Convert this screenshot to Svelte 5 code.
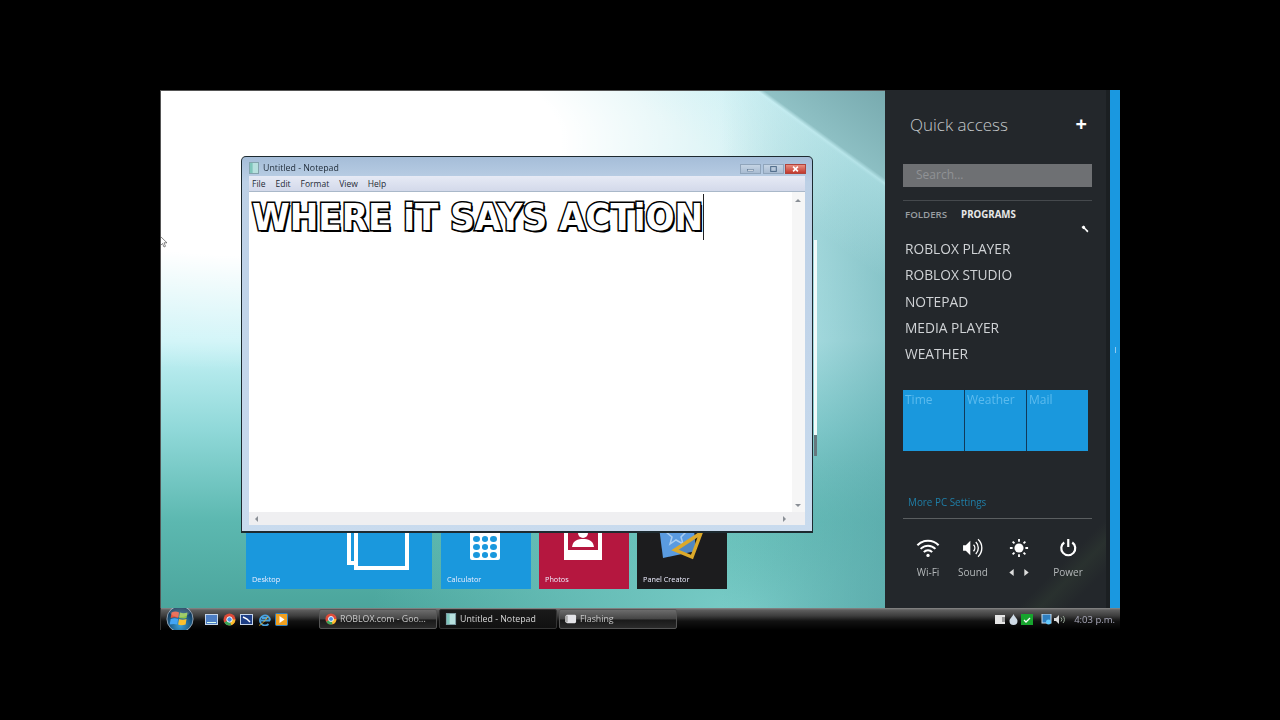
<script>
  const programs = ['ROBLOX PLAYER', 'ROBLOX STUDIO', 'NOTEPAD', 'MEDIA PLAYER', 'WEATHER'];
  const menu = ['File', 'Edit', 'Format', 'View', 'Help'];
  const dots = Array.from({ length: 9 });
</script>

<div class="screen">
  <div class="top">
    <main class="wall">
      <div class="tile blue wide">
        <svg class="glyph desk" viewBox="0 0 62 70"><path d="M2 2v60h7M9 2v65h51V2" fill="none" stroke="#fff" stroke-width="4"/></svg>
        <span>Desktop</span>
      </div>
      <div class="tile blue">
        <div class="calc">{#each dots as _}<i></i>{/each}</div>
        <span>Calculator</span>
      </div>
      <div class="tile red">
        <svg class="glyph photo" viewBox="0 0 38 40"><rect width="38" height="40" fill="#fff"/><rect x="4" y="0" width="30" height="30" fill="#b5173f"/><circle cx="19" cy="13" r="5" fill="#fff"/><path d="M8 27c1-7 6-8 11-8s10 1 11 8z" fill="#fff"/></svg>
        <span>Photos</span>
      </div>
      <div class="tile dark">
        <svg class="glyph panel" viewBox="0 0 48 44"><path d="M3 0h35l3 32-33 7z" fill="#5a9be0"/><path d="M21 6l3 7 7 0-5 5 2 7-7-4-6 4 2-7-6-5 8 0z" fill="none" stroke="#a9cdf0" stroke-width="1.500"/><path d="M46 14L37 38 20 31z" fill="#1c1c1e" fill-opacity=".15" stroke="#dca92a" stroke-width="3.500"/></svg>
        <span>Panel Creator</span>
      </div>

      <svg class="cursor" viewBox="0 0 8 12"><path d="M0.500 0.500v9l2-2 1.500 3.500 1.500-.7L4 6.800l3 0z" fill="#fff" stroke="#555" stroke-width=".7"/></svg>
      <div class="ghost"></div>

      <section class="notepad">
        <header class="title">
          <svg class="np-icon" viewBox="0 0 11 13"><rect x=".5" y=".5" width="10" height="12" fill="#b7e0de" stroke="#7f9fa8"/><path d="M1 1h3v11H1z" fill="#7fc6bb"/></svg>
          <span class="title-text">Untitled - Notepad</span>
          <div class="controls">
            <div class="ctl"><svg viewBox="0 0 20 10"><rect x="6" y="5.500" width="8" height="2" fill="#fff" stroke="#4d6a88" stroke-width=".7"/></svg></div>
            <div class="ctl"><svg viewBox="0 0 20 10"><rect x="6.500" y="2" width="7" height="6" fill="none" stroke="#4d6a88" stroke-width="1.300"/></svg></div>
            <div class="ctl close"><svg viewBox="0 0 20 10"><path d="M7 2l6 6M13 2L7 8" stroke="#fff" stroke-width="2"/></svg></div>
          </div>
        </header>
        <nav class="menu">{#each menu as item}<span>{item}</span>{/each}</nav>
        <div class="edit">
          <div class="doc">
            <div class="typed"><span>WHERE iT SAYS ACTiON</span><b class="caret"></b></div>
          </div>
          <div class="vscroll"><i class="up"></i><i class="down"></i></div>
        </div>
        <div class="hscroll"><i class="left"></i><i class="right"></i></div>
      </section>
    </main>

    <aside class="charm">
      <div class="charm-head"><h1>Quick access</h1><span class="plus">+</span></div>
      <div class="search">Search...</div>
      <div class="tabs"><span>FOLDERS</span><span class="on">PROGRAMS</span></div>
      <div class="wrench-row">
        <svg viewBox="0 0 8 8"><path d="M0.500 2l2-1.500 1.500 1 .3 1.500L7.500 6 6.300 7.500 3.500 4.200 2 4z" fill="#fff"/></svg>
      </div>
      <ul class="programs">{#each programs as p}<li>{p}</li>{/each}</ul>
      <div class="mini-tiles"><div>Time</div><div>Weather</div><div>Mail</div></div>
      <div class="more">More PC Settings</div>
      <div class="sys">
        <div class="sys-item wifi">
          <svg viewBox="0 0 26 20"><path d="M1.500 7a16 16 0 0 1 23 0M5 11a11 11 0 0 1 16 0M8.500 14.500a6 6 0 0 1 9 0" fill="none" stroke="#fff" stroke-width="2.200"/><circle cx="13" cy="18" r="1.800" fill="#fff"/></svg>
          <span>Wi-Fi</span>
        </div>
        <div class="sys-item sound">
          <svg viewBox="0 0 24 22"><path d="M1 8h3l5-5v16l-5-5H1z" fill="#fff"/><path d="M12.500 7.500a5 5 0 0 1 0 7M15 4.500a9 9 0 0 1 0 13M17.500 1.500a13 13 0 0 1 0 19" fill="none" stroke="#fff" stroke-width="1.500"/></svg>
          <span>Sound</span>
        </div>
        <div class="sys-item bright">
          <svg viewBox="0 0 22 22"><circle cx="11" cy="11" r="5" fill="#fff"/><path d="M11 1v3M11 18v3M1 11h3M18 11h3M4 4l2 2M16 16l2 2M18 4l-2 2M6 16l-2 2" stroke="#fff" stroke-width="2"/></svg>
          <span class="arrows"><svg viewBox="0 0 5 8"><path d="M5 0v8L0 4z" fill="#ddd"/></svg><svg viewBox="0 0 5 8"><path d="M0 0v8l5-4z" fill="#ddd"/></svg></span>
        </div>
        <div class="sys-item power">
          <svg viewBox="0 0 20 20"><path d="M6 4.500a7 7 0 1 0 8 0" fill="none" stroke="#fff" stroke-width="2.200"/><path d="M10 1v8" stroke="#fff" stroke-width="2.200"/></svg>
          <span>Power</span>
        </div>
      </div>
    </aside>

    <div class="strip"><i></i></div>
  </div>

  <footer class="taskbar">
    <div class="orb">
      <svg viewBox="0 0 30 30">
        <defs><radialGradient id="orbg" cx=".5" cy=".75" r=".7"><stop offset="0" stop-color="#3aa0d8"/><stop offset="1" stop-color="#0a2a4a"/></radialGradient></defs>
        <circle cx="15" cy="15" r="14" fill="url(#orbg)" stroke="#9ab" stroke-width="1"/>
        <path d="M6 8c3.500-1.500 5.500-1 8 0l-1 6c-2.500-1-5-1-8 0z" fill="#e8553a"/>
        <path d="M15 8c2.500 1 5 1 8 0l-1 6c-3 1-6 .5-8 0z" fill="#8bc34a"/>
        <path d="M5 15c3-1 5-1 8 0l-1 6c-2.500-1-5-1-8 0z" fill="#42a5f5"/>
        <path d="M14 15c2.500 1 5 1 8 0l-1 6c-3 1-6 1-8 0z" fill="#fbc02d"/>
        <ellipse cx="15" cy="7" rx="11" ry="6" fill="#fff" fill-opacity=".18"/>
      </svg>
    </div>
    <div class="quick">
      <svg viewBox="0 0 13 13"><rect x=".5" y="1.500" width="12" height="10" fill="#4d7ec4" stroke="#c5d5ea"/><rect x="2" y="9" width="9" height="1" fill="#dfe"/></svg>
      <svg viewBox="0 0 13 13"><circle cx="6.500" cy="6.500" r="6" fill="#dd4b39"/><path d="M6.500 6.500L1.300 9.500a6 6 0 0 0 7 2.700z" fill="#3aa757"/><path d="M6.500 6.500l1.800 5.700a6 6 0 0 0 4-5.700z" fill="#fbc02d"/><circle cx="6.500" cy="6.500" r="2.700" fill="#4a90e2" stroke="#fff"/></svg>
      <svg viewBox="0 0 13 13"><rect x=".5" y="1.500" width="12" height="10" fill="#1f3f86" stroke="#c5d5ea"/><path d="M3 4l4 2 3 3" stroke="#fff" stroke-width="1.500" fill="none"/></svg>
      <svg viewBox="0 0 13 13"><path d="M12 7.500A5 5 0 1 0 10.500 11M3 7.500h9M4 5h5" fill="none" stroke="#4aa3df" stroke-width="1.800"/><path d="M1 12c1 1 5-3 9-8" fill="none" stroke="#e0b030"/></svg>
      <svg viewBox="0 0 13 13"><rect x=".5" y=".5" width="12" height="12" rx="1" fill="#f0a020" stroke="#2f7fc0"/><path d="M4.500 3v7l5-3.500z" fill="#fff"/></svg>
    </div>
    <div class="tasks">
      <div class="task">
        <svg viewBox="0 0 13 13"><circle cx="6.500" cy="6.500" r="6" fill="#dd4b39"/><path d="M6.500 6.500L1.300 9.500a6 6 0 0 0 7 2.700z" fill="#3aa757"/><path d="M6.500 6.500l1.800 5.700a6 6 0 0 0 4-5.700z" fill="#fbc02d"/><circle cx="6.500" cy="6.500" r="2.700" fill="#4a90e2" stroke="#fff"/></svg>
        <span>ROBLOX.com - Goo...</span>
      </div>
      <div class="task active">
        <svg viewBox="0 0 11 13"><rect x=".5" y=".5" width="10" height="12" fill="#b7e0de" stroke="#7f9fa8"/><path d="M1 1h3v11H1z" fill="#7fc6bb"/></svg>
        <span>Untitled - Notepad</span>
      </div>
      <div class="task">
        <svg viewBox="0 0 13 13"><rect x="1" y="2" width="11" height="9" rx="1.500" fill="#e4e4e8"/><rect x="0" y="3" width="3" height="7" fill="#aaa"/></svg>
        <span>Flashing</span>
      </div>
    </div>
    <div class="tray">
      <svg viewBox="0 0 11 11"><rect y="1" width="10" height="9" fill="#e6e6e6"/><rect x="7" y="3" width="3" height="5" fill="#999"/></svg>
      <svg viewBox="0 0 9 11"><path d="M4.500 0c1 3 4 4.500 4 7a4 4 0 0 1-8 0c0-2.500 3-4 4-7z" fill="#cfdbe6"/></svg>
      <svg class="shield" viewBox="0 0 12 11"><rect width="12" height="11" fill="#17a52e"/><path d="M3 6l2 2 4-4" stroke="#fff" stroke-width="1.300" fill="none"/></svg>
      <span class="sp"></span>
      <svg viewBox="0 0 11 11"><rect x="1" width="9" height="9" fill="#2f7fc0" stroke="#cde"/><circle cx="7.500" cy="8" r="2.500" fill="#6cf"/></svg>
      <svg viewBox="0 0 11 11"><path d="M0 4h2l3-3v9L2 7H0z" fill="#ddd"/><path d="M7 3.500a3 3 0 0 1 0 4M9 2a5 5 0 0 1 0 7" stroke="#9a9" fill="none"/></svg>
      <time>4:03 p.m.</time>
    </div>
  </footer>
</div>

<style>
  :global(body) { margin: 0; background: #000; }

  .screen {
    width: 960px;
    height: 540px;
    margin: 90px 0 0 160px;
    display: flex;
    flex-direction: column;
    font-family: "Open Sans", "Liberation Sans", sans-serif;
    overflow: hidden;
    filter: blur(.3px);
  }

  .top { flex: 1; display: flex; min-height: 0; }

  .wall {
    position: relative;
    width: 725px;
    flex: none;
    box-sizing: border-box;
    display: flex;
    align-items: flex-end;
    gap: 9px;
    padding: 0 0 19px 85px;
    overflow: hidden;
    border-top: 1px solid #555;
    border-left: 1px solid #555;
    background:
      linear-gradient(36deg, transparent 690px, rgba(205,245,250,.4) 766px, rgba(205,245,250,.6) 769px, rgba(140,190,194,.92) 773px, rgba(115,165,170,.98) 860px),
      linear-gradient(90deg, transparent 560px, rgba(85,160,165,.55) 725px),
      radial-gradient(ellipse 600px 230px at 100px 50px, #fff 0 50%, rgba(255,255,255,0) 100%),
      radial-gradient(ellipse 380px 160px at 590px 520px, rgba(130,212,208,.85), rgba(130,212,208,0) 100%),
      linear-gradient(180deg, #bfe9ec 0, #c5f2f6 250px, #8fd8d8 340px, #5cb8b0 430px, #4ba59c 518px);
  }

  .tile {
    position: relative;
    width: 90px;
    height: 90px;
    flex: none;
    color: #eef;
    overflow: hidden;
  }
  .tile span {
    position: absolute;
    left: 6px;
    bottom: 5px;
    font-size: 7.300px;
    line-height: 10px;
  }
  .wide { width: 186px; }
  .blue { background: #1a98dd; }
  .red { background: #b5173f; margin-left: -1px; }
  .dark { background: #1c1c1e; margin-left: -1px; }

  .glyph { position: absolute; }
  .desk { left: 101px; top: 2px; width: 62px; height: 70px; }
  .photo { left: 25px; bottom: 29px; width: 38px; height: 40px; }
  .panel { left: 18px; bottom: 26px; width: 48px; height: 44px; }

  .calc {
    position: absolute;
    left: 29px;
    bottom: 29px;
    width: 30px;
    height: 36px;
    box-sizing: border-box;
    padding: 2px 3px;
    background: #fff;
    border-radius: 2px;
    display: grid;
    grid-template-columns: repeat(3, 1fr);
    gap: 2px;
    align-content: end;
  }
  .calc i { height: 6px; border-radius: 50%; background: #1a98dd; }

  .cursor { position: absolute; left: -1px; top: 145px; width: 8px; height: 12px; }

  .ghost {
    position: absolute;
    left: 653px;
    top: 149px;
    width: 3px;
    height: 216px;
    background: linear-gradient(#f0fafa 0 195px, #66787e 195px);
  }

  .notepad {
    position: absolute;
    left: 80px;
    top: 65px;
    width: 572px;
    height: 377px;
    box-sizing: border-box;
    padding: 0 7px 6px;
    display: flex;
    flex-direction: column;
    background: linear-gradient(#a5bdd8 0, #bcd0e6 25px, #c9dbee 100%);
    border: 1px solid #1d2a30;
    border-bottom-width: 2px;
    border-radius: 5px 5px 0 0;
  }

  .title {
    height: 19px;
    flex: none;
    box-sizing: border-box;
    padding-top: 3px;
    display: flex;
    align-items: center;
    gap: 4px;
  }
  .np-icon { width: 10px; height: 12px; }
  .title-text { font-size: 8.800px; color: #1f2b38; }
  .controls { margin-left: auto; display: flex; gap: 1.500px; align-self: flex-start; margin-top: 4px; margin-right: -1px; }
  .ctl {
    width: 21px;
    height: 10px;
    box-sizing: border-box;
    background: linear-gradient(#c5d4e4, #a9bcd2);
    border: 1px solid #90a5bb;
    display: flex;
  }
  .ctl svg { width: 100%; height: 100%; }
  .close { background: linear-gradient(#e88e80, #c2392e); border-color: #b0433c; }

  .menu {
    height: 15px;
    flex: none;
    display: flex;
    align-items: center;
    gap: 10px;
    padding-left: 3px;
    background: linear-gradient(#e6eaf5, #d3d9ea);
    font-size: 8.500px;
    color: #1e2a36;
    border-bottom: 1px solid #a9b8c9;
  }

  .edit { flex: 1; display: flex; min-height: 0; background: #fff; }
  .doc { flex: 1; padding: 2px 0 0 2px; }

  .typed { display: flex; align-items: flex-start; height: 46px; }
  .typed span {
    font-family: "DejaVu Sans", sans-serif;
    font-weight: 700;
    font-stretch: condensed;
    font-size: 38px;
    line-height: 46px;
    color: #fff;
    white-space: pre;
    -webkit-text-stroke: 3px #000;
    paint-order: stroke fill;
    text-shadow: 2px 2px 0 #000;
    padding-left: 1px;
  }
  .caret { width: 1px; height: 46px; background: #222; }

  .vscroll {
    position: relative;
    width: 13px;
    background: #f6f6f6;
    flex: none;
  }
  .up, .down, .left, .right { position: absolute; width: 0; height: 0; border: 3px solid transparent; }
  .up { top: 4px; left: 3px; border-bottom-color: #8a8f96; }
  .down { bottom: 2px; left: 3px; border-top-color: #8a8f96; }

  .hscroll { position: relative; height: 13px; flex: none; background: #efeff1; }
  .left { left: 3px; top: 4px; border-right-color: #8a8f96; }
  .right { right: 16px; top: 4px; border-left-color: #8a8f96; }

  .charm {
    width: 225px;
    flex: none;
    box-sizing: border-box;
    padding: 0 14px 0 18px;
    background:
      linear-gradient(135deg, transparent 88%, rgba(80,110,70,.14) 91%, transparent 95%),
      #23272b;
    border-right: 4px solid #1b1f22;
    display: flex;
    flex-direction: column;
    color: #e6e6e6;
  }

  .charm-head { display: flex; justify-content: space-between; align-items: center; height: 68px; padding: 0 5px 0 7px; flex: none; }
  h1 { margin: 0; font-size: 17px; font-weight: 300; color: #c4c8ca; font-family: "Open Sans", sans-serif; }
  .plus { font-size: 20px; font-weight: 700; color: #fff; margin-top: -2px; }

  .search {
    height: 23px;
    flex: none;
    margin-top: 6px;
    background: #6e7073;
    color: #909295;
    font-size: 12px;
    line-height: 22px;
    padding-left: 13px;
  }

  .tabs {
    margin-top: 13px;
    padding: 7px 0 0 2px;
    border-top: 1px solid #45494d;
    display: flex;
    gap: 14px;
    font-size: 9.700px;
    font-weight: 600;
    line-height: 14px;
    color: #9a9ea2;
  }
  .on { color: #e8e8e8; font-weight: 700; }

  .wrench-row { height: 8px; flex: none; display: flex; justify-content: flex-end; padding: 3px 3px 0 0; }
  .wrench-row svg { width: 8px; height: 8px; }

  .programs { list-style: none; margin: 3px 0 0; padding: 0 0 0 2px; }
  .programs li { height: 26.250px; line-height: 26px; font-size: 13.750px; color: #d0d3d6; }

  .mini-tiles {
    margin-top: 23px;
    width: 185px;
    height: 61px;
    flex: none;
    display: flex;
    background: #1a98dd;
    font-size: 12px;
    color: #5cbbee;
  }
  .mini-tiles div { flex: 1; padding-left: 2px; line-height: 19px; border-left: 1px solid #103a5a; }
  .mini-tiles div:first-child { border-left: 0; }

  .more {
    margin-top: 44px;
    padding: 0 0 8px 5px;
    font-size: 9.900px;
    line-height: 15px;
    color: #1f7fa8;
    border-bottom: 1px solid #5a5e60;
  }

  .sys { position: relative; height: 40px; margin-top: 19px; }
  .sys-item {
    display: flex;
    flex-direction: column;
    align-items: center;
    gap: 8px;
    font-size: 10px;
    line-height: 12px;
    color: #b4b8ba;
    position: absolute;
    transform: translateX(-50%);
  }
  .sys-item svg { height: 20px; width: 24px; }
  .wifi { left: 25px; }
  .sound { left: 70px; }
  .bright { left: 116px; }
  .power { left: 165px; }
  .arrows { display: flex; gap: 10px; height: 12px; align-items: center; }
  .arrows svg { width: 5px; height: 7px; }

  .strip {
    width: 10px;
    flex: none;
    position: relative;
    background: #1a98e0;
  }
  .strip i { position: absolute; left: 5px; top: 257px; width: 1px; height: 6px; background: #8cc8ee; }

  .taskbar {
    height: 22px;
    flex: none;
    display: flex;
    align-items: center;
    background: linear-gradient(#8a8a8a 0, #5e5e5e 2px, #3c3c3c 8px, #121212 13px, #000 22px);
    border-left: 1px solid #333;
  }

  .orb { width: 28px; height: 28px; margin: 0 0 0 5px; flex: none; }
  .orb svg { width: 100%; height: 100%; }

  .quick { display: flex; gap: 4.500px; margin-left: 11px; width: 115px; flex: none; }
  .quick svg { width: 13px; height: 13px; }

  .tasks { display: flex; gap: 2px; height: 20px; flex: none; margin-left: -1px; }
  .task {
    width: 118px;
    box-sizing: border-box;
    padding-left: 5px;
    display: flex;
    align-items: center;
    gap: 3px;
    font-size: 8.800px;
    color: #c8c8c8;
    background: linear-gradient(#6c6c6c, #444 50%, #1a1a1a 55%, #2a2a2a);
    border: 1px solid #555;
    border-radius: 2px;
  }
  .task svg { width: 12px; height: 12px; flex: none; }
  .task.active { background: linear-gradient(#1a1a1a, #111); border-color: #333; color: #d8d8d8; }

  .tray { margin-left: auto; display: flex; align-items: center; gap: 2px; padding-right: 5px; }
  .tray svg { width: 11px; height: 11px; }
  .tray .shield { width: 12px; }
  .sp { width: 4px; }
  time { font-size: 9.500px; color: #aab; margin-left: 7px; }
</style>
